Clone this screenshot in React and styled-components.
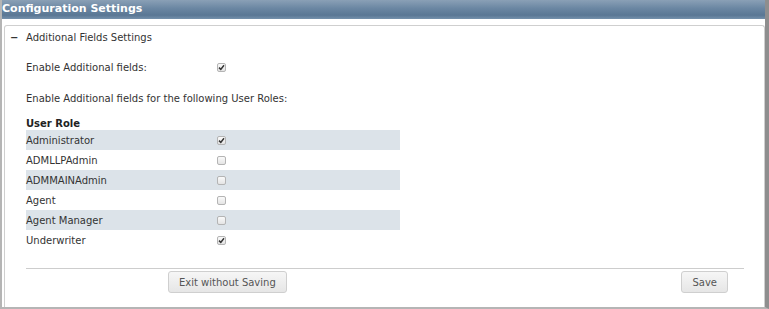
import React from 'react';
import styled, { createGlobalStyle } from 'styled-components';

const GlobalStyle = createGlobalStyle`
  html, body {
    margin: 0;
    padding: 0;
    background: #fff;
  }
  body {
    font-family: "DejaVu Sans", Verdana, sans-serif;
    font-size: 10px;
    color: #333;
  }
`;

const Frame = styled.div`
  width: 769px;
  height: 309px;
  box-sizing: border-box;
  border-left: 2px solid #b5b5b5;
  border-right: 4px solid #8e8e8e;
  border-bottom: 2px solid #b5b5b5;
  display: flex;
  flex-direction: column;
  overflow: hidden;
`;

const TitleBar = styled.div`
  height: 19px;
  flex: none;
  background: linear-gradient(to bottom, #8aa0b6 0%, #6a86a2 45%, #5a7794 80%, #7591ac 100%);
  color: #fff;
  font-weight: bold;
  font-size: 11px;
  line-height: 18px;
  margin-left: -2px;
  margin-right: -4px;
  padding-left: 2px;
`;

const Body = styled.div`
  flex: 1;
  padding: 6px 0 0 2px;
  display: flex;
`;

const Panel = styled.div`
  flex: 1;
  border: 1px solid #cfcfcf;
  border-bottom: none;
  border-radius: 3px 3px 0 0;
  padding: 4px 20px 0 5px;
  display: flex;
  flex-direction: column;
`;

const SectionHead = styled.div`
  display: flex;
  align-items: center;
  gap: 8px;
  height: 14px;
  color: #333;
`;

const Minus = styled.span`
  font-weight: bold;
  width: 8px;
  text-align: center;
`;

const Content = styled.div`
  padding-left: 16px;
  display: flex;
  flex-direction: column;
`;

const FieldRow = styled.div`
  display: grid;
  grid-template-columns: 191px auto;
  align-items: center;
  height: 20px;
  white-space: nowrap;
  margin-top: ${p => p.$top || 0}px;
`;

const RoleHead = styled.div`
  font-weight: bold;
  color: #222;
  margin-top: 9px;
  height: 13px;
  line-height: 13px;
`;

const RoleTable = styled.div`
  width: 374px;
  display: flex;
  flex-direction: column;
`;

const RoleRow = styled.div`
  display: grid;
  grid-template-columns: 191px auto;
  align-items: center;
  height: 20px;
  background: ${p => (p.$shaded ? '#dce3e9' : 'transparent')};
`;

const Box = styled.span`
  width: 9px;
  height: 9px;
  box-sizing: border-box;
  border: 1px solid #b4b4b4;
  border-radius: 2px;
  background: linear-gradient(to bottom, #fafafa, #e4e4e4);
  display: inline-flex;
  align-items: center;
  justify-content: center;
`;

const Footer = styled.div`
  margin-top: 18px;
  margin-left: 16px;
  border-top: 1px solid #cdcdcd;
  padding: 2px 16px 0 142px;
  display: flex;
  justify-content: space-between;
  align-items: flex-start;
`;

const Button = styled.button`
  font-family: "DejaVu Sans", Verdana, sans-serif;
  font-size: 10px;
  color: #555;
  height: 22px;
  padding: 0 10px;
  border: 1px solid #cfcfcf;
  border-radius: 3px;
  background: linear-gradient(to bottom, #f6f6f6, #e6e6e6);
  cursor: pointer;
`;

function Check({ checked }) {
  return (
    <Box>
      {checked && (
        <svg width="7" height="7" viewBox="0 0 7 7">
          <path d="M1 3.6 L2.8 5.4 L6 1.2" fill="none" stroke="#333" strokeWidth="1.5" />
        </svg>
      )}
    </Box>
  );
}

const roles = [
  { name: 'Administrator', on: true },
  { name: 'ADMLLPAdmin', on: false },
  { name: 'ADMMAINAdmin', on: false },
  { name: 'Agent', on: false },
  { name: 'Agent Manager', on: false },
  { name: 'Underwriter', on: true },
];

export default function App() {
  return (
    <>
      <GlobalStyle />
      <Frame>
        <TitleBar>Configuration Settings</TitleBar>
        <Body>
          <Panel>
            <SectionHead>
              <Minus>−</Minus>
              <span>Additional Fields Settings</span>
            </SectionHead>
            <Content>
              <FieldRow $top={13}>
                <span>Enable Additional fields:</span>
                <Check checked />
              </FieldRow>
              <FieldRow $top={11}>
                <span>Enable Additional fields for the following User Roles:</span>
              </FieldRow>
              <RoleHead>User Role</RoleHead>
              <RoleTable>
                {roles.map((r, i) => (
                  <RoleRow key={r.name} $shaded={i % 2 === 0}>
                    <span>{r.name}</span>
                    <Check checked={r.on} />
                  </RoleRow>
                ))}
              </RoleTable>
            </Content>
            <Footer>
              <Button>Exit without Saving</Button>
              <Button>Save</Button>
            </Footer>
          </Panel>
        </Body>
      </Frame>
    </>
  );
}
